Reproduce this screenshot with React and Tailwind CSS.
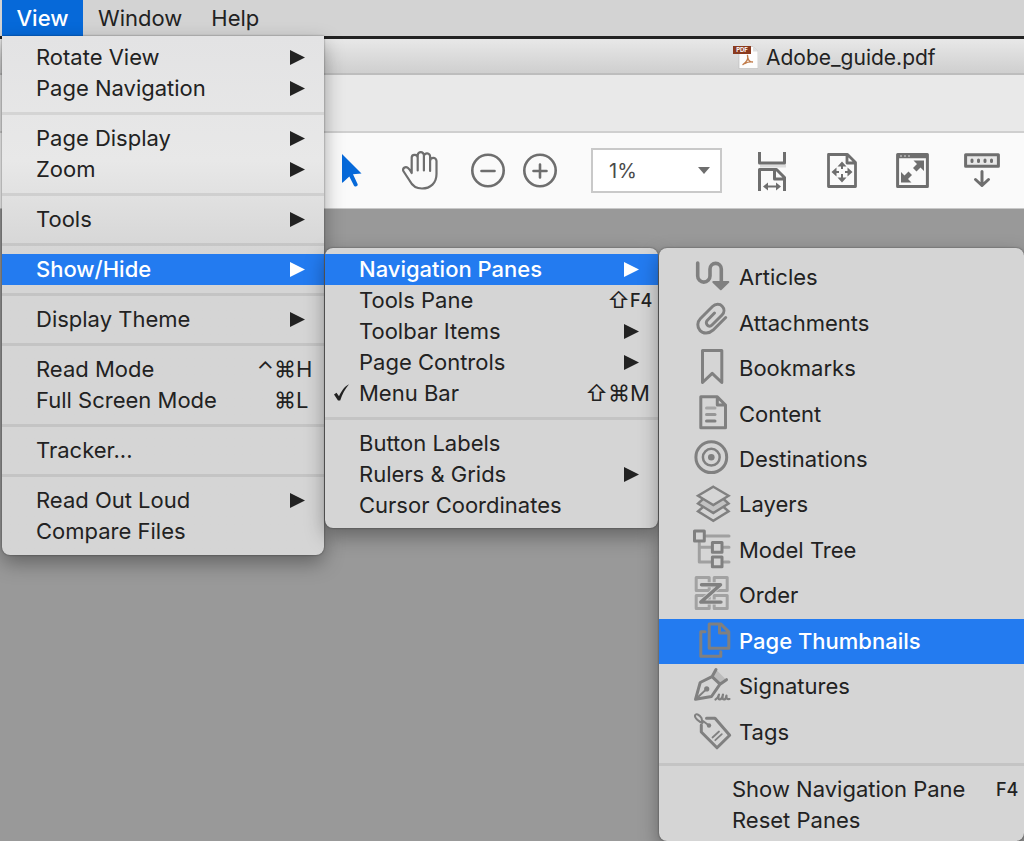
import React from 'react';

const viewMenu = [
  [
    { label: 'Rotate View', submenu: true },
    { label: 'Page Navigation', submenu: true },
  ],
  [
    { label: 'Page Display', submenu: true },
    { label: 'Zoom', submenu: true },
  ],
  [{ label: 'Tools', submenu: true }],
  [{ label: 'Show/Hide', submenu: true, active: true }],
  [{ label: 'Display Theme', submenu: true }],
  [
    { label: 'Read Mode', modifiers: '⌃⌘', keyName: 'H' },
    { label: 'Full Screen Mode', modifiers: '⌘', keyName: 'L' },
  ],
  [{ label: 'Tracker...' }],
  [
    { label: 'Read Out Loud', submenu: true },
    { label: 'Compare Files' },
  ],
];

const showHideMenu = [
  [
    { label: 'Navigation Panes', submenu: true, active: true },
    { label: 'Tools Pane', modifiers: '⇧', keyName: 'F4' },
    { label: 'Toolbar Items', submenu: true },
    { label: 'Page Controls', submenu: true },
    { label: 'Menu Bar', modifiers: '⇧⌘', keyName: 'M', checked: true },
  ],
  [
    { label: 'Button Labels' },
    { label: 'Rulers & Grids', submenu: true },
    { label: 'Cursor Coordinates' },
  ],
];

const panes = [
  {
    label: 'Articles',
    icon: (
      <>
        <path d="M5.7 8v13a6.15 6.15 0 0 0 12.3 0v-7a5.65 5.65 0 0 1 11.3 0v13" strokeWidth="3.6" />
        <path d="M21.3 27h15l-7.5 7.300z" fill="currentColor" strokeWidth="2" />
      </>
    ),
  },
  {
    label: 'Attachments',
    icon: (
      <path d="M33.7 16.5L21 29.2C17 33 11 33 8 29.5C5 26 5 21 8.5 17.5L20.5 5.5C23.5 2.5 28 2.8 30.2 5.2C32.6 7.7 32.6 11.5 29.8 14.3L20 24C18.5 25.5 16.5 25.5 15.2 24C14 22.7 14 20.6 15.4 19.2L22.5 12" />
    ),
  },
  { label: 'Bookmarks', icon: <path d="M10.5 4.5h19.3v32l-9.6-9.2-9.7 9.2z" /> },
  {
    label: 'Content',
    icon: (
      <>
        <path d="M8.8 4.8h16.5l8.2 8.2v22.7H8.8zM25.3 4.8V13h8.2" />
        <path d="M14.5 16H23" opacity=".55" />
        <path d="M14.5 22.5H23" opacity=".75" />
        <path d="M14.5 29H23" />
      </>
    ),
  },
  {
    label: 'Destinations',
    icon: (
      <>
        <circle cx="19.3" cy="20.2" r="15.4" />
        <circle cx="19.3" cy="20.2" r="8.4" strokeWidth="2.5" />
        <circle cx="19.3" cy="20.2" r="3.3" fill="currentColor" stroke="none" />
      </>
    ),
  },
  {
    label: 'Layers',
    icon: (
      <g strokeWidth="2.4" strokeLinejoin="miter">
        <path d="M10.5 25.5L6 29.3l15.3 9.5 15.3-9.5-4.5-3.8" />
        <path d="M10.5 17.5L6 21.5 21.3 31l15.3-9.5-4.5-4" fill="#c2c2c2" />
        <path d="M21.3 4.700l15.3 9-15.3 9.400L6 13.700z" fill="#d5d5d5" />
      </g>
    ),
  },
  {
    label: 'Model Tree',
    icon: (
      <>
        <path d="M14 8h23M7.3 15v19h12M7.3 19.3h12M32 19.3h5M32 34h5" stroke="#a0a0a0" />
        <path d="M2.5 3.1h9.8v9.8H2.5zM20.4 14.6H30v9.6h-9.6zM20.4 29H30v9.8h-9.6z" />
      </>
    ),
  },
  {
    label: 'Order',
    icon: (
      <>
        <path d="M4.2 4.6h13v13h-13zM22.2 4.6h13v13h-13zM4.2 22.6h13v13h-13zM22.2 22.6h13v13h-13z" stroke="#a2a2a2" />
        <path d="M9.5 11.8H28L9 29.1h20" stroke="#d3d3d3" strokeWidth="5" strokeLinecap="butt" />
        <path d="M9.5 11.8h19L8.8 29.1H29" strokeWidth="3.4" />
      </>
    ),
  },
  {
    label: 'Page Thumbnails',
    active: true,
    icon: (
      <>
        <path d="M13 12.7H8.8v24.6h20v-4.500" />
        <path d="M17.2 4.9h11.5l8.1 8v16.300H17.2zM27.5 4.900v9h9" />
      </>
    ),
  },
  {
    label: 'Signatures',
    icon: (
      <>
        <path d="M24 5.5l10 10-6.5 5L20 13z" fill="#bcbcbc" stroke="none" />
        <path d="M24 5.5L20 12.7 8.2 18.5 3.5 35.3l16-2.8L28 20.2l6.500-4.500M20 12.700l8 7.500" />
        <path d="M4 35l10-9.500" strokeWidth="1.8" />
        <circle cx="14.7" cy="24.9" r="2.6" fill="currentColor" stroke="none" />
        <path d="M23.5 35.5c2-1 3-3 3.5-5-1 3-.7 5 .5 5 1.800 0 3-2.500 3.500-5-.8 3-.5 5 .8 5 1.700 0 2.400-2 2.700-4-.4 2.500.3 4 3 3.500" strokeWidth="2.2" />
      </>
    ),
  },
  {
    label: 'Tags',
    icon: (
      <>
        <path d="M14.5 8.3H23l14.7 17L25 37.8 9.3 22v-7" />
        <path d="M17 15.5L11 11M10.5 13C7 12 2.5 8 3 5.5 3.5 3 7.5 4.5 9.5 8z" strokeWidth="2" />
        <circle cx="17" cy="15.5" r="2.2" fill="currentColor" stroke="none" />
        <path d="M20.5 27.5l6.5-6M23.3 30.2l6.5-6" strokeWidth="1.8" />
      </>
    ),
  },
];

function Arrow() {
  return (
    <svg className="mr-[19px] h-4 w-[15px]" viewBox="0 0 15 16" aria-hidden="true">
      <path d="M0 0l15 7.500L0 15z" fill="currentColor" />
    </svg>
  );
}

function Shortcut({ modifiers, keyName }) {
  return (
    <span className="flex items-center">
      <span>{modifiers}</span>
      <span className={`w-7 text-left ${keyName.length > 1 ? 'text-[18px] font-medium' : ''}`}>{keyName}</span>
    </span>
  );
}

function MenuItem({ item, inset = 'pl-[34px]' }) {
  return (
    <li role="none">
      <button
        type="button"
        role="menuitem"
        className={`relative flex h-[31px] w-full items-center justify-between whitespace-nowrap text-left ${inset} ${item.active ? 'bg-[#237bf0] font-medium text-white' : ''}`}
      >
        {item.checked && (
          <svg className="absolute left-2 top-1.5 h-[17px] w-[17px]" viewBox="0 0 17 17" aria-hidden="true">
            <path d="M1 10.500L3.500 8.800 6 12.300C8.500 7 11.500 2.500 16 .3 12 5 9.200 10.500 7.200 16.500H5z" fill="currentColor" />
          </svg>
        )}
        <span>{item.label}</span>
        {item.submenu && <Arrow />}
        {item.keyName && <Shortcut modifiers={item.modifiers} keyName={item.keyName} />}
      </button>
    </li>
  );
}

function Separator() {
  return (
    <li role="separator" className="flex h-[19px] items-center">
      <span className="h-[3px] w-full bg-black/8" />
    </li>
  );
}

function MenuGroups({ groups }) {
  return groups.map((group, index) => (
    <React.Fragment key={index}>
      {index > 0 && <Separator />}
      {group.map((item) => (
        <MenuItem key={item.label} item={item} />
      ))}
    </React.Fragment>
  ));
}

function ToolButton({ label, width = 'w-[70px]', children }) {
  return (
    <button type="button" aria-label={label} className={`flex h-11 shrink-0 items-center justify-center text-[#6e6e6e] ${width}`}>
      {children}
    </button>
  );
}

function Toolbar() {
  return (
    <div className="flex h-[76px] items-center border-b border-[#c8c8c8] bg-[#fafafa] pl-[318px]">
      <ToolButton label="Select" width="w-[68px]">
        <svg className="h-[34px] w-5" viewBox="0 0 20 34">
          <path d="M0 0L19.500 19.500 11 20.200 15.700 30.200Q16 31.500 14.500 32.200 12.700 33.200 12 31.800L7.300 22.500.8 28.500Q0 29 0 28z" fill="#0669d9" />
        </svg>
      </ToolButton>
      <ToolButton label="Pan" width="w-[68px]">
        <svg className="h-[39px] w-9" viewBox="0 0 36 39" fill="none" stroke="currentColor" strokeWidth="2.2" strokeLinecap="round">
          <path d="M9.700 22V7.200a3 3 0 0 1 6-.5M15.700 19.500V4.300a3.100 3.100 0 0 1 6.200 0v15.200M21.900 5.300a3 3 0 0 1 6.200.5V20M28.100 10a3.100 3.100 0 0 1 6.400 0v13c0 9-6 14.500-14.500 14.500-6.500 0-10-3.300-12.300-7.800L1.500 20.300c-1.500-3 1.800-5.300 4.400-3.500 1.800 1.300 2.800 3.200 3.800 5.200" />
        </svg>
      </ToolButton>
      <ToolButton label="Zoom out" width="w-[68px]">
        <svg className="h-9 w-9" viewBox="0 0 36 36" fill="none" stroke="currentColor" strokeWidth="2.6" strokeLinecap="round">
          <circle cx="18" cy="17.5" r="15.7" />
          <path d="M11.500 18h13" />
        </svg>
      </ToolButton>
      <ToolButton label="Zoom in" width="w-9">
        <svg className="h-9 w-9" viewBox="0 0 36 36" fill="none" stroke="currentColor" strokeWidth="2.6" strokeLinecap="round">
          <circle cx="18" cy="17.5" r="15.7" />
          <path d="M11.500 18h13M18 11.500v13" />
        </svg>
      </ToolButton>
      <div className="relative ml-[33px] mr-[15px] shrink-0">
        <select aria-label="Zoom level" className="block h-[45px] w-[131px] appearance-none border-2 border-[#c9c9c9] bg-white pl-4 pt-0.5 text-[20px] text-[#4a4a4a]">
          <option>1%</option>
        </select>
        <svg className="pointer-events-none absolute right-3 top-[19px] h-[7px] w-3" viewBox="0 0 12 7">
          <path d="M0 0h12L6 7z" fill="#6e6e6e" />
        </svg>
      </div>
      <ToolButton label="Fit width">
        <svg className="h-10 w-7" viewBox="0 0 28 40" fill="none" stroke="currentColor" strokeWidth="3">
          <path d="M2 15h26" stroke="#dcdcdc" />
          <path d="M1.500 1v11h25V1M1.500 40V18.500h17l8 8V40M16.500 19v9h10" strokeLinejoin="round" />
          <path d="M8 35.500h12" strokeWidth="2" />
          <path d="M10 31.500l-5 4 5 4zM18 31.500l5 4-5 4z" fill="currentColor" stroke="none" />
        </svg>
      </ToolButton>
      <ToolButton label="Fit page">
        <svg className="h-[35px] w-[30px]" viewBox="0 0 30 35" fill="none" stroke="currentColor" strokeWidth="2.8" strokeLinejoin="round">
          <path d="M1.500 1.500h19l8 8v24h-27zM20 2v8h8" />
          <path d="M15 12v4M15 21v5M7 19h5M18 19h5" strokeWidth="2" />
          <path d="M15 8.500l4.500 5h-9zM15 29.500l4.500-5h-9zM4.500 19l5-4.500v9zM25.500 19l-5-4.500v9z" fill="currentColor" stroke="none" />
        </svg>
      </ToolButton>
      <ToolButton label="Full screen">
        <svg className="h-[35px] w-[33px]" viewBox="0 0 33 35" fill="none" stroke="currentColor" strokeWidth="3" strokeLinejoin="round">
          <path d="M1.600 1.600h29.800v31.800H1.600z" />
          <path d="M2 3.500h29" strokeWidth="3.5" />
          <path d="M4 3h2M8 3h2M12 3h2" stroke="#b5b5b5" strokeWidth="1.5" />
          <path d="M17.500 7.500H28V18l-3.500-3.500-4 4-3.500-3.500 4-4zM15.500 29.500H5V19l3.500 3.500 4-4L16 22l-4 4z" fill="currentColor" stroke="none" />
        </svg>
      </ToolButton>
      <ToolButton label="Show read toolbar">
        <svg className="h-[35px] w-9" viewBox="0 0 36 35" fill="none" stroke="currentColor" strokeWidth="3" strokeLinecap="round" strokeLinejoin="round">
          <path d="M1.600 1.800h32.800v11.500H1.600z" fill="#e8e8e8" />
          <path d="M8 7v1.500M14.500 7v1.500M21 7v1.500M27.500 7v1.500" />
          <path d="M18 18.500v14M11.500 26.500l6.500 6 6.500-6" />
        </svg>
      </ToolButton>
    </div>
  );
}

export default function App() {
  return (
    <div className="relative flex min-h-screen flex-col overflow-hidden bg-[#999999] font-['Inter','Liberation_Sans',sans-serif] text-[22px] leading-[31px] text-[#222222]">
      <nav aria-label="Application" className="flex h-9 shrink-0 items-center bg-[#d3d3d3] pl-[2px]">
        <button type="button" aria-expanded="true" className="h-9 w-[81px] bg-[#0669d9] text-center font-medium text-white">View</button>
        <button type="button" className="h-9 px-[15px]">Window</button>
        <button type="button" className="h-9 px-[14px]">Help</button>
      </nav>

      {/* Document window */}
      <main className="border-t-[3px] border-[#222222]">
        <header className="flex h-9 items-center gap-2 border-b-2 border-[#bdbdbd] bg-linear-to-b from-[#e8e8e8] to-[#cfcfcf] pl-[733px] pt-0.5">
          <svg className="h-[23px] w-[25px] shrink-0" viewBox="0 0 25 23" aria-hidden="true">
            <path d="M6 .5h14l5 5v17H6z" fill="#fdfdfd" stroke="#bbb" strokeWidth=".6" />
            <path d="M20 .5v5h5z" fill="#dedede" />
            <path d="M0 0h18v8H0z" fill="#8a3a1f" />
            <text x="9" y="6.3" textAnchor="middle" fontSize="6" fontWeight="700" fill="#fff">PDF</text>
            <path d="M14.500 9.500c1 3-1 6.500-4.500 9M14.800 11.500c.5 3 2.500 4.500 5.200 4.500-3-.3-6 .2-8 1.500" fill="none" stroke="#c07a48" strokeWidth="1.4" strokeLinecap="round" />
          </svg>
          <h1 className="text-[21px]">Adobe_guide.pdf</h1>
        </header>
        <div className="h-[58px] border-b-2 border-[#cfcfcf] bg-[#e9e9e9]" />
        <Toolbar />
      </main>

      <ul role="menu" aria-label="View" className="absolute left-[2px] top-9 w-[322px] rounded-b-lg bg-[#d5d5d5] bg-linear-to-b from-[#e3e3e4] via-[#e8e8e8] via-24% to-[#d5d5d5] to-42% pb-2 pt-[6px] shadow-[0_0_2px_rgba(0,0,0,0.5),0_8px_20px_rgba(0,0,0,0.35)]">
        <MenuGroups groups={viewMenu} />
      </ul>

      <ul role="menu" aria-label="Show/Hide" className="absolute left-[325px] top-[248px] w-[333px] rounded-lg bg-[#d5d5d5] pb-[7px] pt-[6px] shadow-[0_0_2px_rgba(0,0,0,0.5),0_8px_20px_rgba(0,0,0,0.35)]">
        <MenuGroups groups={showHideMenu} />
      </ul>

      <ul role="menu" aria-label="Navigation Panes" className="absolute left-[659px] right-0 top-[248px] rounded-lg bg-[#d5d5d5] pb-[5px] pt-[7px] shadow-[0_0_2px_rgba(0,0,0,0.5),0_8px_20px_rgba(0,0,0,0.35)]">
        <li role="none">
          <ul role="group" className="grid h-[500px] auto-rows-fr">
            {panes.map((pane) => (
              <li key={pane.label} role="none" className={pane.active ? 'bg-[#237bf0] font-medium text-white' : ''}>
                <button type="button" role="menuitem" className="flex h-full w-full items-center gap-[7px] pl-[33px] text-left">
                  <svg className="h-[45px] w-10 shrink-0 text-[#808080]" viewBox="0 0 40 45" fill="none" stroke="currentColor" strokeWidth="3" strokeLinecap="round" strokeLinejoin="round" aria-hidden="true">
                    {pane.icon}
                  </svg>
                  {pane.label}
                </button>
              </li>
            ))}
          </ul>
        </li>
        <Separator />
        <MenuItem item={{ label: 'Show Navigation Pane', keyName: 'F4' }} inset="pl-[73px]" />
        <MenuItem item={{ label: 'Reset Panes' }} inset="pl-[73px]" />
      </ul>
    </div>
  );
}
